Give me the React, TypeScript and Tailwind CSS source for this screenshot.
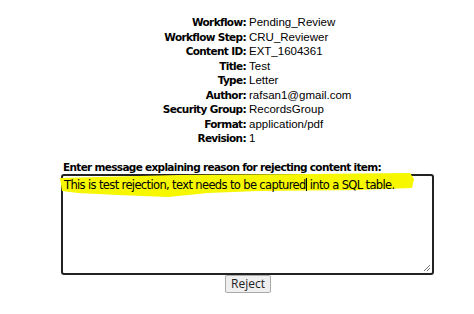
const rows: [string, string][] = [
  ["Workflow:", "Pending_Review"],
  ["Workflow Step:", "CRU_Reviewer"],
  ["Content ID:", "EXT_1604361"],
  ["Title:", "Test"],
  ["Type:", "Letter"],
  ["Author:", "rafsan1@gmail.com"],
  ["Security Group:", "RecordsGroup"],
  ["Format:", "application/pdf"],
  ["Revision:", "1"],
];

export default function App() {
  return (
    <div className="h-[314px] w-[474px] overflow-hidden bg-white text-black">
      <div className="grid grid-cols-[184px_1fr] pt-[15px] pl-[62px]">
        {rows.map(([label, value]) => (
          <div className="contents" key={label}>
            <div className="h-[14.5px] text-right font-['DejaVu_Sans',sans-serif] text-[10.5px] leading-[14.5px] font-bold tracking-[-0.65px]">
              {label}
            </div>
            <div className="h-[14.5px] pl-[3px] font-['Liberation_Sans',Arial,sans-serif] text-[11.5px] leading-[14.5px]">
              {value}
            </div>
          </div>
        ))}
      </div>
      <div className="mt-[15px] pl-[63px] font-['DejaVu_Sans',sans-serif] text-[10.5px] leading-[13px] font-bold tracking-[-0.68px]">
        Enter message explaining reason for rejecting content item:
      </div>
      <div className="relative ml-[61px] h-[101px] w-[373px] rounded-[3px] border-2 border-[#222]">
        <svg className="absolute left-[-5px] top-[-3px]" width="360" height="28" viewBox="0 0 360 28">
          <path
            d="M2 5 L120 2 L250 1 L352 0 L356 6 L354 15 L300 17 L200 18 L150 20 L110 24 L60 22 L20 20 L4 18 Z"
            fill="#f7f700"
          />
        </svg>
        <div className="relative whitespace-nowrap pl-[1px] font-['DejaVu_Sans',sans-serif] text-[11.5px] leading-[15px] tracking-[-0.63px]">
          This is test rejection, text needs to be captured
          <span className="inline-block h-[13px] w-px translate-y-[2px] bg-black" />
          {" "}into a SQL table.
        </div>
        <svg className="absolute bottom-[1px] right-[1px]" width="9" height="9" viewBox="0 0 9 9">
          <path d="M8 2 L2 8 M8 5 L5 8" stroke="#777" strokeWidth="1" />
        </svg>
      </div>
      <div className="flex pl-[225px]">
        <button
          className="h-[18px] rounded-[2px] border border-[#aaa] bg-[#efefef] px-[5px] font-['Open_Sans',sans-serif] text-[12px] leading-[16px] text-[#222]"
          type="button"
        >
          Reject
        </button>
      </div>
    </div>
  );
}
